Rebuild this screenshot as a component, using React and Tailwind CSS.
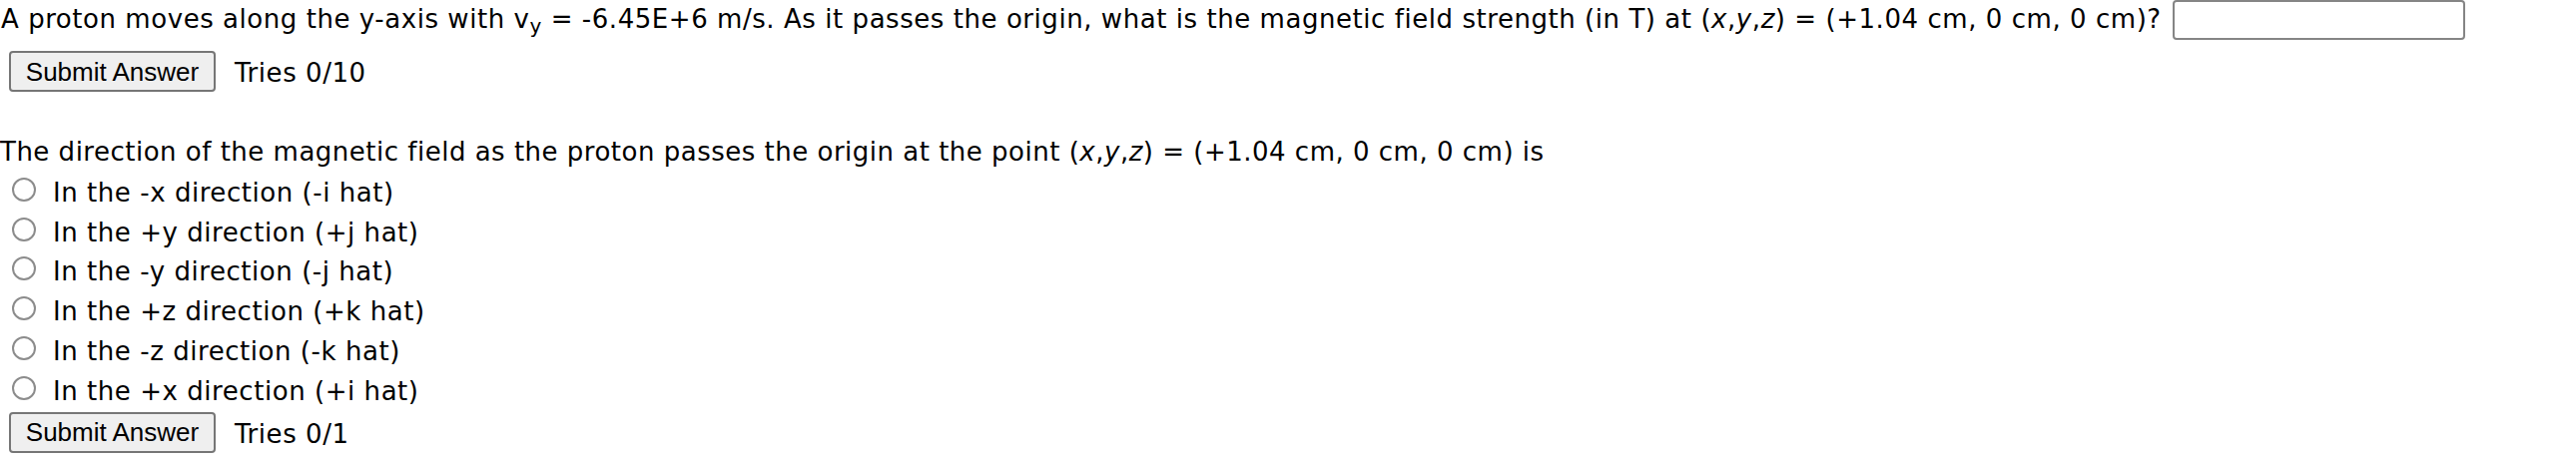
import React from 'react';

const options = [
  'In the -x direction (-i hat)',
  'In the +y direction (+j hat)',
  'In the -y direction (-j hat)',
  'In the +z direction (+k hat)',
  'In the -z direction (-k hat)',
  'In the +x direction (+i hat)',
];

function SubmitRow({ tries }) {
  return (
    <div className="flex items-center h-[41px]">
      <button className="ml-[9px] w-[207px] h-[41px] bg-[#efefef] border-2 border-[#767676] rounded-[4px] text-[26px] leading-none text-black tracking-normal font-['Liberation_Sans',Arial,sans-serif]">
        Submit Answer
      </button>
      <span className="ml-[19px] mt-[3px] leading-none">{tries}</span>
    </div>
  );
}

export default function App() {
  return (
    <div className="w-[2580px] h-[460px] bg-white text-black font-['DejaVu_Sans',Verdana,sans-serif] text-[26px] tracking-[0.55px] overflow-hidden">
      <div className="flex items-start h-[40px]">
        <span className="h-[38px] flex items-center pl-[1px] leading-none whitespace-nowrap">
          <span>
            A proton moves along the y-axis with v<sub className="text-[20px]">y</sub> = -6.45E+6 m/s. As it passes the origin,
            what is the magnetic field strength (in T) at (<i>x</i>,<i>y</i>,<i>z</i>) = (+1.04 cm, 0 cm, 0 cm)?
          </span>
        </span>
        <input
          type="text"
          className="ml-[11px] w-[293px] h-[40px] border-2 border-[#858585] rounded-[4px] bg-white outline-none"
        />
      </div>

      <div className="mt-[11px]">
        <SubmitRow tries="Tries 0/10" />
      </div>

      <p className="mt-[47px] h-[26px] leading-none whitespace-nowrap tracking-[0.5px]">
        The direction of the magnetic field as the proton passes the origin at the point (<i>x</i>,<i>y</i>,<i>z</i>) = (+1.04
        cm, 0 cm, 0 cm) is
      </p>

      <div className="mt-[8px]">
        {options.map((opt) => (
          <label key={opt} className="flex items-center h-[39.8px]">
            <span className="ml-[12px] mb-[6px] w-[24px] h-[24px] rounded-full border-2 border-[#8c8c8c] bg-white shrink-0" />
            <span className="ml-[17px] leading-none whitespace-nowrap">{opt}</span>
          </label>
        ))}
      </div>

      <div className="mt-[1px]">
        <SubmitRow tries="Tries 0/1" />
      </div>
    </div>
  );
}
